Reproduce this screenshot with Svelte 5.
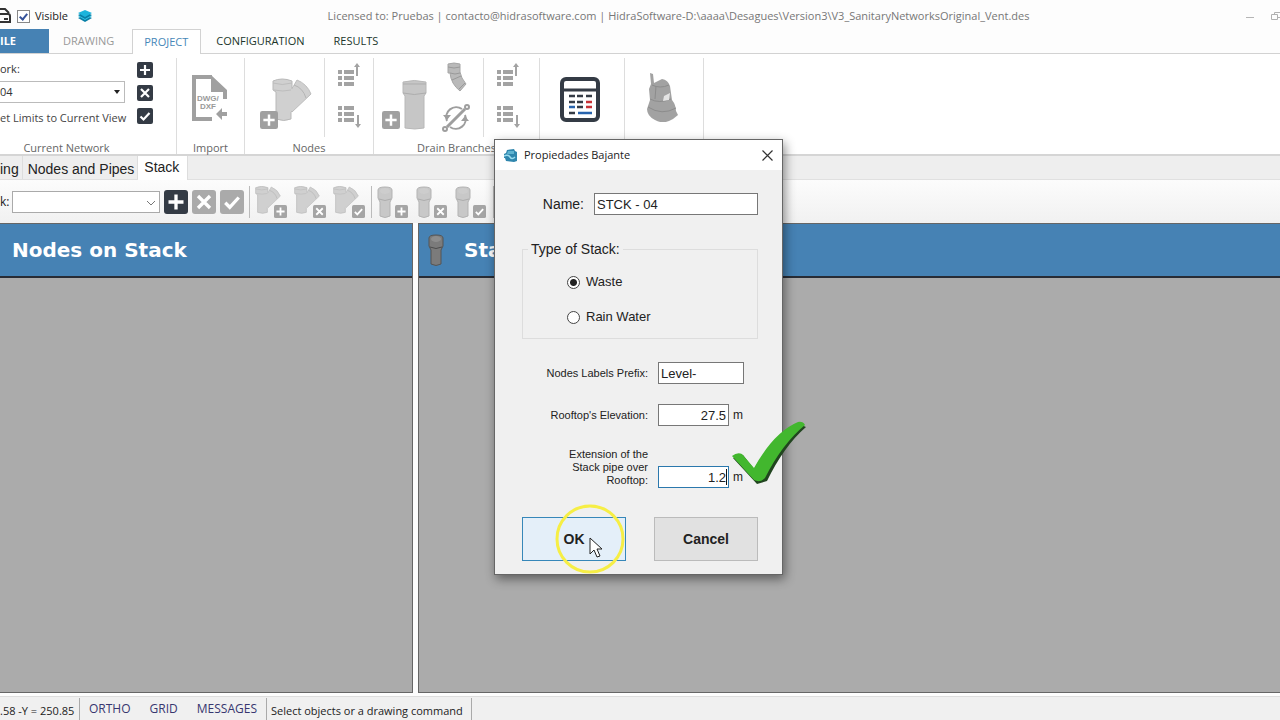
<script>
    const menuTabs = ["DRAWING", "PROJECT", "CONFIGURATION", "RESULTS"];
    const marks = ["plus", "cross", "check"];
    const statusToggles = ["ORTHO", "GRID", "MESSAGES"];

    let visible = true;
    let network = "04";
    let name = "STCK - 04";
    let stackType = "waste";
    let prefix = "Level-";
    let elevation = "27.5";
    let extension = "1.2";
</script>

{#snippet mark(kind, x, y, size, fill)}
    <svg {x} {y} width={size} height={size} viewBox="0 0 16 16">
        <rect width="16" height="16" rx="2" {fill} />
        {#if kind === "plus"}
            <path d="M8 3v10M3 8h10" stroke="#fff" stroke-width="2.2" />
        {:else if kind === "cross"}
            <path d="M4 4l8 8M12 4l-8 8" stroke="#fff" stroke-width="2.2" />
        {:else}
            <path d="M3.5 8.5l3 3 6-6.5" stroke="#fff" stroke-width="2.2" fill="none" />
        {/if}
    </svg>
{/snippet}

{#snippet tee()}
    <path d="M28 16l5-5 4-7q10 4 14 14L32 36l-6-6z" fill="#d0d0d0" stroke="#bdbdbd" />
    <path d="M34 9q9 3 12 13" fill="none" stroke="#b5b5b5" />
    <path d="M13 5q9-4 19 0v9l-1 2v27q-7 3-15 0V16l-3-2z" fill="#d0d0d0" />
    <path d="M31 36v7q-7 3-15 0V16l-3-2V5q9-4 19 0v8" fill="none" stroke="#b8b8b8" />
    <path d="M13 7q9 3 19 0M14 14q9 2 17 0" fill="none" stroke="#bdbdbd" />
{/snippet}

{#snippet pipe(dark)}
    <path
        d="M1 4q0-3 7-3t7 3v8l-2 4v14q-5 3-10 0V16l-2-4z"
        fill={dark ? "#7b7b7b" : "#c8c8c8"}
        stroke={dark ? "#555" : "#b3b3b3"}
    />
    <ellipse cx="8" cy="5" rx="5" ry="3" fill={dark ? "#8d8d8d" : "#cdcdcd"} />
    <path d="M2 13q6 3 12 0" fill="none" stroke={dark ? "#4c4c4c" : "#adadad"} />
{/snippet}

{#snippet sortList(down)}
    <svg width="24" height="30" viewBox="0 0 24 30">
        <g fill="#a3a3a3">
            <path d="M0 7h4v4H0zM6 7h10v4H6zM0 13h4v4H0zM6 13h10v4H6zM0 19h4v4H0zM6 19h10v4H6z" />
            {#if down}
                <path d="M19 16h2v9h2l-3 4-3-4h2z" />
            {:else}
                <path d="M18 13h2V4h2l-3-4-3 4h2z" />
            {/if}
        </g>
    </svg>
{/snippet}

<div class="app">
    <header class="titlebar">
        <svg width="12" height="16" viewBox="0 0 12 16">
            <path d="M0 1h5l4 4M0 6h8q2 0 2 2v6H0" fill="none" stroke="#333" stroke-width="2" />
            <path d="M4 11h4" stroke="#333" stroke-width="2" />
        </svg>
        <label class="visible">
            <input type="checkbox" bind:checked={visible} />
            Visible
        </label>
        <svg width="14" height="12" viewBox="0 0 14 12">
            <path d="M0 8l7-3 7 3-7 4z" fill="#087fa6" />
            <path d="M0 6l7-3 7 3-7 4z" fill="#37c9ec" />
            <path d="M0 5l7-3 7 3-7 4z" fill="#087fa6" />
            <path d="M0 3l7-3 7 3-7 4z" fill="#1bb4dc" />
        </svg>
        <div class="license">Licensed to: Pruebas | contacto@hidrasoftware.com | HidraSoftware-D:\aaaa\Desagues\Version3\V3_SanitaryNetworksOriginal_Vent.des</div>
        <button class="window-button" aria-label="Minimize">
            <svg width="8" height="10" viewBox="0 0 8 10"><path d="M0 6.5h8" stroke="#b5b5b5" /></svg>
        </button>
        <button class="window-button" aria-label="Restore">
            <svg width="9" height="10" viewBox="0 0 9 10">
                <path d="M.5 3.5h6v5h-6zM3.5 3V1.5H9M7 6.5h2" fill="none" stroke="#b0b0b0" />
            </svg>
        </button>
    </header>

    <nav class="menu">
        <button class="file">ILE</button>
        {#each menuTabs as tab}
            <button class="menu-tab" class:active={tab === "PROJECT"} class:muted={tab === "DRAWING"}>{tab}</button>
        {/each}
    </nav>

    <section class="ribbon">
        <div class="group network">
            <div class="network-body">
                <div class="network-fields">
                    <label for="network">ork:</label>
                    <div class="select-wrap">
                        <select id="network" bind:value={network}>
                            <option>04</option>
                        </select>
                        <svg class="arrow" width="6" height="4" viewBox="0 0 6 4"><path d="M0 0h6L3 4z" fill="#222" /></svg>
                    </div>
                    <span class="limits">et Limits to Current View</span>
                </div>
                <div class="network-actions">
                    {#each marks as kind}
                        <button aria-label={kind}>
                            <svg width="16" height="16">{@render mark(kind, 0, 0, 16, "#343b45")}</svg>
                        </button>
                    {/each}
                </div>
            </div>
            <div class="caption">Current Network</div>
        </div>

        <div class="group import">
            <button class="tool" aria-label="Import drawing">
                <svg width="40" height="50" viewBox="0 0 40 50">
                    <path d="M21 3H1v46h20v-4H5V7h16z" fill="#a0a0a0" />
                    <path d="M20 3l16 15v9h-4v-7H20z" fill="#a0a0a0" />
                    <text x="6" y="29" class="file-type">DWG/</text>
                    <text x="9" y="37" class="file-type">DXF</text>
                    <path d="M25 42l6-6v4h5v4h-5v4z" fill="#a0a0a0" />
                </svg>
            </button>
            <div class="caption">Import</div>
        </div>

        <div class="group nodes">
            <div class="tools">
                <button class="tool" aria-label="Add node">
                    <svg width="54" height="54" viewBox="0 0 54 54">
                        {@render tee()}
                        {@render mark("plus", 0, 35, 18, "#a0a0a0")}
                    </svg>
                </button>
                <div class="sorts">
                    {@render sortList(false)}
                    {@render sortList(true)}
                </div>
            </div>
            <div class="caption">Nodes</div>
        </div>

        <div class="group branches">
            <div class="tools">
                <button class="tool" aria-label="Add branch">
                    <svg width="46" height="54" viewBox="0 0 46 54">
                        <path d="M21 6q11-3 23 0v11l-2 3v32q-9 2-19 0V20l-2-3z" fill="#c6c6c6" stroke="#b8b8b8" />
                        <path d="M21 8h23M21 17q11 3 23 0" fill="none" stroke="#adadad" />
                        {@render mark("plus", 0, 35, 18, "#a0a0a0")}
                    </svg>
                </button>
                <div class="branch-tools">
                    <svg width="24" height="32" viewBox="0 0 24 32">
                        <path d="M4 2q6-2 12 0v8q1 6 6 12l-6 7Q7 22 6 11H4z" fill="#b9b9b9" stroke="#a6a6a6" />
                        <path d="M4 5q6 2 12 0M6 11q5 2 10 0M8 18l9-4M15 27l6-6" fill="none" stroke="#999" />
                    </svg>
                    <svg width="28" height="28" viewBox="0 0 28 28" fill="none" stroke="#9e9e9e" stroke-width="2">
                        <path d="M5 23L23 5" stroke-width="3" />
                        <circle cx="3" cy="25" r="2" />
                        <circle cx="25" cy="3" r="2" />
                        <path d="M20 5A10 10 0 0 0 5 17M8 23A10 10 0 0 0 23 11" />
                        <path d="M1 11h8l-4 5zM19 17h8l-4-5z" fill="#9e9e9e" stroke="none" />
                    </svg>
                </div>
                <div class="sorts">
                    {@render sortList(false)}
                    {@render sortList(true)}
                </div>
            </div>
            <div class="caption">Drain Branches</div>
        </div>

        <div class="group calculate">
            <button class="tool" aria-label="Calculate">
                <svg width="40" height="46" viewBox="0 0 40 46">
                    <rect x="2" y="3" width="36" height="41" rx="4" fill="#fff" stroke="#343b45" stroke-width="4" />
                    <path d="M2 14h36" stroke="#343b45" stroke-width="3" />
                    <g stroke="#343b45" stroke-width="2.5">
                        <path d="M9 20h6M17 20h6M26 20h6M9 26h6M17 26h6M17 31h6M9 37h6" />
                        <path d="M26 26h6M26 31h6" stroke="#c83236" />
                        <path d="M9 31h6M18 37h14" stroke="#2763ad" />
                    </g>
                </svg>
            </button>
        </div>

        <div class="group pump">
            <button class="tool" aria-label="Pump">
                <svg width="32" height="50" viewBox="0 0 32 50">
                    <path d="M4 1l3 1 1 9 8-4q6 1 8 7l2 14q4 5 4 11l2 4-5 4-4 2q-7 3-14-1Q1 44 1 37l3-9-1-11 2-5z" fill="#a2a2a2" />
                    <path d="M6 13q8 4 17 0M4 27q9 5 21 0M2 35q14 9 28 1M10 14l-1 13" fill="none" stroke="#8c8c8c" />
                    <path d="M18 24l6-3-1 7-6 1z" fill="#e4e4e4" />
                </svg>
            </button>
        </div>
    </section>

    <nav class="subtabs">
        <button class="drawing">ing</button>
        <button>Nodes and Pipes</button>
        <button class="selected">Stack</button>
    </nav>

    <section class="toolbar">
        <label for="stack">k:</label>
        <div class="select-wrap">
            <select id="stack"><option></option></select>
            <svg class="arrow" width="8" height="6" viewBox="0 0 8 6"><path d="M0 1l4 4 4-4" fill="none" stroke="#777" /></svg>
        </div>
        <div class="stack-actions">
            {#each marks as kind, i}
                <button aria-label={`${kind} stack`}>
                    <svg width="24" height="24">{@render mark(kind, 0, 0, 24, i === 0 ? "#343b45" : "#aaa")}</svg>
                </button>
            {/each}
        </div>
        <div class="toolbar-set">
            {#each marks as kind}
                <button aria-label={`${kind} node`}>
                    <svg width="33" height="32" viewBox="0 0 33 32">
                        <svg width="26" height="28" viewBox="12 3 40 42">{@render tee()}</svg>
                        {@render mark(kind, 19, 19, 13, "#a5a5a5")}
                    </svg>
                </button>
            {/each}
        </div>
        <div class="toolbar-set">
            {#each marks as kind}
                <button aria-label={`${kind} pipe`}>
                    <svg width="33" height="32" viewBox="0 0 33 32">
                        {@render pipe(false)}
                        {@render mark(kind, 18, 19, 13, "#a5a5a5")}
                    </svg>
                </button>
            {/each}
        </div>
        <div class="toolbar-set"></div>
    </section>

    <main class="panels">
        <section class="panel left">
            <h2>Nodes on Stack</h2>
            <div class="canvas"></div>
        </section>
        <section class="panel">
            <h2>
                <svg width="16" height="32" viewBox="0 0 16 32">{@render pipe(true)}</svg>
                Stack
            </h2>
            <div class="canvas"></div>
        </section>
    </main>

    <footer class="statusbar">
        <span class="coords">.58 -Y = 250.85</span>
        <div class="toggles">
            {#each statusToggles as toggle}
                <button>{toggle}</button>
            {/each}
        </div>
        <span class="hint">Select objects or a drawing command</span>
    </footer>

    <div class="dialog" role="dialog" aria-labelledby="dialog-title">
        <div class="dialog-title">
            <svg width="13" height="13" viewBox="0 0 13 13">
                <path d="M3 1l7-1 1 2 2 1v9l-3 1-8-1-1-3H0V5l2-1z" fill="#2f86ad" />
                <path d="M4 2h6v3H3z" fill="#5fb3d0" />
                <path d="M0 7q4-2 6 1t5 0" fill="none" stroke="#9bdcee" stroke-width="1.5" />
            </svg>
            <span id="dialog-title">Propiedades Bajante</span>
            <button class="close" aria-label="Close">
                <svg width="11" height="11" viewBox="0 0 11 11"><path d="M.5.5l10 10M10.5.5l-10 10" stroke="#333" stroke-width="1.2" /></svg>
            </button>
        </div>

        <form class="dialog-body" on:submit|preventDefault>
            <div class="name-row">
                <label for="name">Name:</label>
                <input id="name" type="text" bind:value={name} />
            </div>

            <fieldset>
                <legend>Type of Stack:</legend>
                <label><input type="radio" value="waste" bind:group={stackType} />Waste</label>
                <label><input type="radio" value="rain" bind:group={stackType} />Rain Water</label>
            </fieldset>

            <div class="fields">
                <label for="prefix">Nodes Labels Prefix:</label>
                <input id="prefix" type="text" bind:value={prefix} />
                <label for="elevation">Rooftop's Elevation:</label>
                <div class="measure">
                    <input id="elevation" type="text" bind:value={elevation} />
                    <span>m</span>
                </div>
                <label for="extension">Extension of the<br />Stack pipe over<br />Rooftop:</label>
                <div class="measure editing">
                    <input id="extension" type="text" bind:value={extension} />
                    <span>m</span>
                </div>
            </div>

            <div class="dialog-buttons">
                <button class="ok" type="submit">OK</button>
                <button type="button">Cancel</button>
            </div>
        </form>

        <svg class="tick" width="76" height="64" viewBox="0 0 76 64">
            <path d="M2 37l10-3 11 14Q43 13 68 3l7 3Q53 25 36 60l-10 3z" fill="#21451f" />
            <path d="M1 35q5-4 10-2l12 14Q43 11 67 1q5-1 7 3Q51 23 34 57q-5 5-11 2Z" fill="#42b72e" />
        </svg>
        <svg class="pointer" width="72" height="72" viewBox="0 0 72 72">
            <circle cx="36" cy="35" r="33" fill="none" stroke="#f6ee45" stroke-width="3" />
            <path d="M36 34v16l4-4 3 7 3-1-3-7h5z" fill="#fff" stroke="#222" />
        </svg>
    </div>
</div>

<style>
    :global(body) {
        background: #fdfdfd;
    }

    .app {
        position: relative;
        display: flex;
        flex-direction: column;
        min-height: 100vh;
        overflow: hidden;
        font: 12px/16px "Open Sans", "Noto Sans", sans-serif;
        color: #444;
    }

    button,
    input,
    select {
        box-sizing: border-box;
        margin: 0;
        padding: 0;
        border: 0;
        background: none;
        color: inherit;
        font: inherit;
    }

    svg {
        display: block;
        flex: none;
    }

    .titlebar {
        display: flex;
        align-items: center;
        height: 29px;
        padding-top: 3px;
        box-sizing: border-box;
    }

    .visible {
        display: flex;
        align-items: center;
        gap: 5px;
        margin: 0 10px 0 5px;
        font-size: 11px;
        color: #222;
    }

    .visible input {
        appearance: none;
        width: 13px;
        height: 13px;
        border: 1px solid #888;
        background: #fff;
        display: grid;
        place-items: center;
    }

    .visible input:checked::before {
        content: "";
        width: 3px;
        height: 6px;
        border: solid #35539a;
        border-width: 0 2px 2px 0;
        transform: rotate(40deg);
    }

    .license {
        flex: 1;
        padding-left: 36px;
        text-align: center;
        font-size: 11px;
        white-space: nowrap;
        color: #777;
    }

    .window-button {
        margin-left: 17px;
    }

    .menu {
        display: flex;
        height: 25px;
        border-bottom: 1px solid #d2d2d2;
        box-sizing: border-box;
    }

    .file {
        width: 49px;
        padding-right: 34px;
        background: #4682b4;
        color: #fff;
        font-weight: bold;
        font-size: 11px;
    }

    .menu-tab {
        padding: 0 14px 0 15px;
        font-size: 11px;
        color: #20352b;
    }

    .menu-tab.muted {
        padding: 0 18px 0 14px;
        color: #999;
    }

    .menu-tab.active {
        height: 25px;
        padding: 0 12px 0 11px;
        border: 1px solid #d2d2d2;
        border-bottom: 0;
        background: #fff;
        color: #4787b8;
    }

    .ribbon {
        display: flex;
        height: 102px;
        padding-top: 4px;
        border-bottom: 2px solid #d5d5d5;
        background: #fff;
        box-sizing: border-box;
    }

    .group {
        display: flex;
        flex-direction: column;
        align-items: center;
        justify-content: space-between;
        box-sizing: border-box;
        border-right: 1px solid #ddd;
    }

    .caption {
        font-size: 11px;
        line-height: 12px;
        color: #666;
        white-space: nowrap;
    }

    .network {
        width: 177px;
    }

    .network .caption {
        padding-right: 43px;
    }

    .network-body {
        display: flex;
        align-self: stretch;
        gap: 12px;
    }

    .network-fields {
        width: 125px;
        font-size: 11px;
        line-height: 16px;
        white-space: nowrap;
        color: #333;
    }

    .network-fields label {
        display: block;
        padding: 3px 0 4px;
    }

    .select-wrap {
        position: relative;
    }

    .select-wrap select {
        appearance: none;
        display: block;
        width: 100%;
        height: 22px;
        border: 1px solid #aaa;
        background: #fff;
    }

    .network-fields select {
        border-left: 0;
        border-color: #bbb;
    }

    .arrow {
        position: absolute;
        right: 5px;
        top: 9px;
        pointer-events: none;
    }

    .limits {
        display: block;
        padding-top: 7px;
        color: #444;
    }

    .network-actions {
        display: flex;
        flex-direction: column;
        gap: 7px;
        padding-top: 4px;
    }

    .import {
        width: 68px;
    }

    .nodes {
        width: 129px;
    }

    .branches {
        width: 166px;
    }

    .calculate {
        width: 85px;
        padding-right: 4px;
    }

    .pump {
        width: 79px;
        padding-right: 4px;
    }

    .tool {
        margin-top: 14px;
    }

    .file-type {
        font: bold 8px "Liberation Sans", sans-serif;
        fill: #999;
    }

    .tools {
        display: flex;
        justify-content: space-between;
        align-self: stretch;
        padding-left: 15px;
    }

    .branches .tools {
        padding-left: 8px;
    }

    .nodes .tool,
    .branches .tool {
        margin-top: 10px;
    }

    .sorts {
        display: flex;
        flex-direction: column;
        gap: 6px;
        box-sizing: border-box;
        width: 49px;
        height: 79px;
        padding: 5px 0 0 13px;
        border-left: 1px solid #ddd;
    }

    .branches .sorts {
        width: 56px;
    }

    .branch-tools {
        display: flex;
        flex-direction: column;
        align-items: center;
        gap: 10px;
        padding-top: 4px;
    }

    .calculate .tool {
        margin-top: 18px;
    }

    .subtabs {
        display: flex;
        height: 23px;
        background: #eee;
        border-bottom: 1px solid #e0e0e0;
        font: 14px/22px "Liberation Sans", Arial, sans-serif;
        color: #222;
    }

    .subtabs button {
        padding: 2px 3px 0 5px;
        border-right: 1px solid #ddd;
        line-height: 20px;
    }

    .subtabs .drawing {
        padding-left: 0;
    }

    .subtabs .selected {
        height: 24px;
        padding: 0 8px 2px 6px;
        background: #fff;
    }

    .toolbar {
        display: flex;
        align-items: center;
        height: 43px;
        background: linear-gradient(#fcfcfc, #f1f1f1);
        color: #222;
    }

    .toolbar label {
        width: 12px;
    }

    .toolbar .select-wrap {
        width: 148px;
    }

    .stack-actions {
        display: flex;
        gap: 4px;
        padding: 0 5px 0 4px;
    }

    .toolbar-set {
        display: flex;
        gap: 6px;
        height: 32px;
        padding: 0 5px;
        border-left: 1px solid #bbb;
    }

    .panels {
        display: flex;
        flex: 1;
        gap: 5px;
    }

    .panel {
        display: flex;
        flex-direction: column;
        flex: 1;
        border: solid #666;
        border-width: 1px 0 1px 1px;
    }

    .panel.left {
        flex: 0 0 412px;
        border-width: 1px 1px 1px 0;
    }

    .panel h2 {
        display: flex;
        align-items: center;
        gap: 20px;
        height: 52px;
        margin: 0;
        padding-left: 9px;
        background: #4682b4;
        color: #fff;
        font: bold 20px/28px "DejaVu Sans", Verdana, sans-serif;
    }

    .panel.left h2 {
        padding-left: 12px;
    }

    .canvas {
        flex: 1;
        border-top: 2px solid #282c35;
        background: #ababab;
    }

    .statusbar {
        display: flex;
        height: 22px;
        margin-top: 3px;
        border-top: 1px solid #ddd;
        padding-top: 1px;
        background: #f0f0f0;
        color: #222;
        line-height: 22px;
        white-space: nowrap;
    }

    .statusbar > * {
        box-sizing: border-box;
        border-right: 1px solid #aaa;
    }

    .coords {
        width: 80px;
        padding-top: 2px;
        font-size: 11px;
    }

    .toggles {
        display: flex;
        justify-content: space-between;
        width: 187px;
        padding: 0 9px;
        color: #37366f;
    }

    .hint {
        padding: 2px 8px 0 4px;
        font-size: 11px;
    }

    .dialog {
        position: absolute;
        top: 139px;
        left: 494px;
        box-sizing: border-box;
        width: 289px;
        border: 1px solid #666;
        background: #f0f0f0;
        box-shadow: 2px 4px 10px rgba(0, 0, 0, 0.45);
        font: 14px/18px "Liberation Sans", Arial, sans-serif;
        color: #222;
    }

    .dialog-title {
        display: flex;
        align-items: center;
        gap: 7px;
        height: 30px;
        padding: 0 9px;
        background: #fff;
        font: 11px/16px "Open Sans", "Noto Sans", sans-serif;
    }

    .close {
        margin-left: auto;
    }

    .dialog-body {
        padding: 23px 24px 13px 27px;
    }

    .dialog-body input[type="text"] {
        height: 22px;
        padding: 0 2px;
        border: 1px solid #777;
        background: #fff;
        font-size: 13px;
    }

    .name-row {
        display: flex;
        align-items: center;
        justify-content: flex-end;
        gap: 10px;
    }

    .name-row input {
        width: 164px;
    }

    fieldset {
        margin: 25px 0 0;
        padding: 15px 0 12px 44px;
        border: 1px solid #ddd;
    }

    legend {
        margin-left: -39px;
        padding: 0 3px;
    }

    fieldset label {
        display: flex;
        align-items: center;
        gap: 6px;
        font-size: 13px;
    }

    fieldset label + label {
        margin-top: 17px;
    }

    fieldset input {
        appearance: none;
        width: 13px;
        height: 13px;
        border: 1px solid #444;
        border-radius: 50%;
        background: #fff;
    }

    fieldset input:checked {
        background: radial-gradient(#222 0 3px, #fff 4px);
    }

    .fields {
        display: grid;
        grid-template-columns: 126px 1fr;
        column-gap: 10px;
        row-gap: 20px;
        align-items: center;
        margin-top: 23px;
    }

    .fields > label {
        text-align: right;
        font-size: 11px;
        line-height: 13px;
    }

    #prefix {
        width: 86px;
    }

    .measure {
        display: flex;
        align-items: center;
        gap: 4px;
    }

    .measure span {
        font-size: 12px;
        line-height: 16px;
    }

    .measure input {
        width: 71px;
        text-align: right;
    }

    .editing {
        padding-top: 20px;
    }

    .dialog-body .editing input {
        border-color: #2b78ad;
        background: linear-gradient(#111, #111) right 1px center / 1px 16px no-repeat #fff;
    }

    .dialog-buttons {
        display: flex;
        justify-content: space-between;
        margin-top: 29px;
    }

    .dialog-buttons button {
        width: 104px;
        height: 44px;
        border: 1px solid #bbb;
        background: #e1e1e1;
        font-weight: bold;
    }

    .dialog-buttons .ok {
        border-color: #3687b9;
        background: #e4eff9;
    }

    .tick {
        position: absolute;
        left: 236px;
        top: 281px;
    }

    .pointer {
        position: absolute;
        left: 59px;
        top: 364px;
        pointer-events: none;
    }
</style>
